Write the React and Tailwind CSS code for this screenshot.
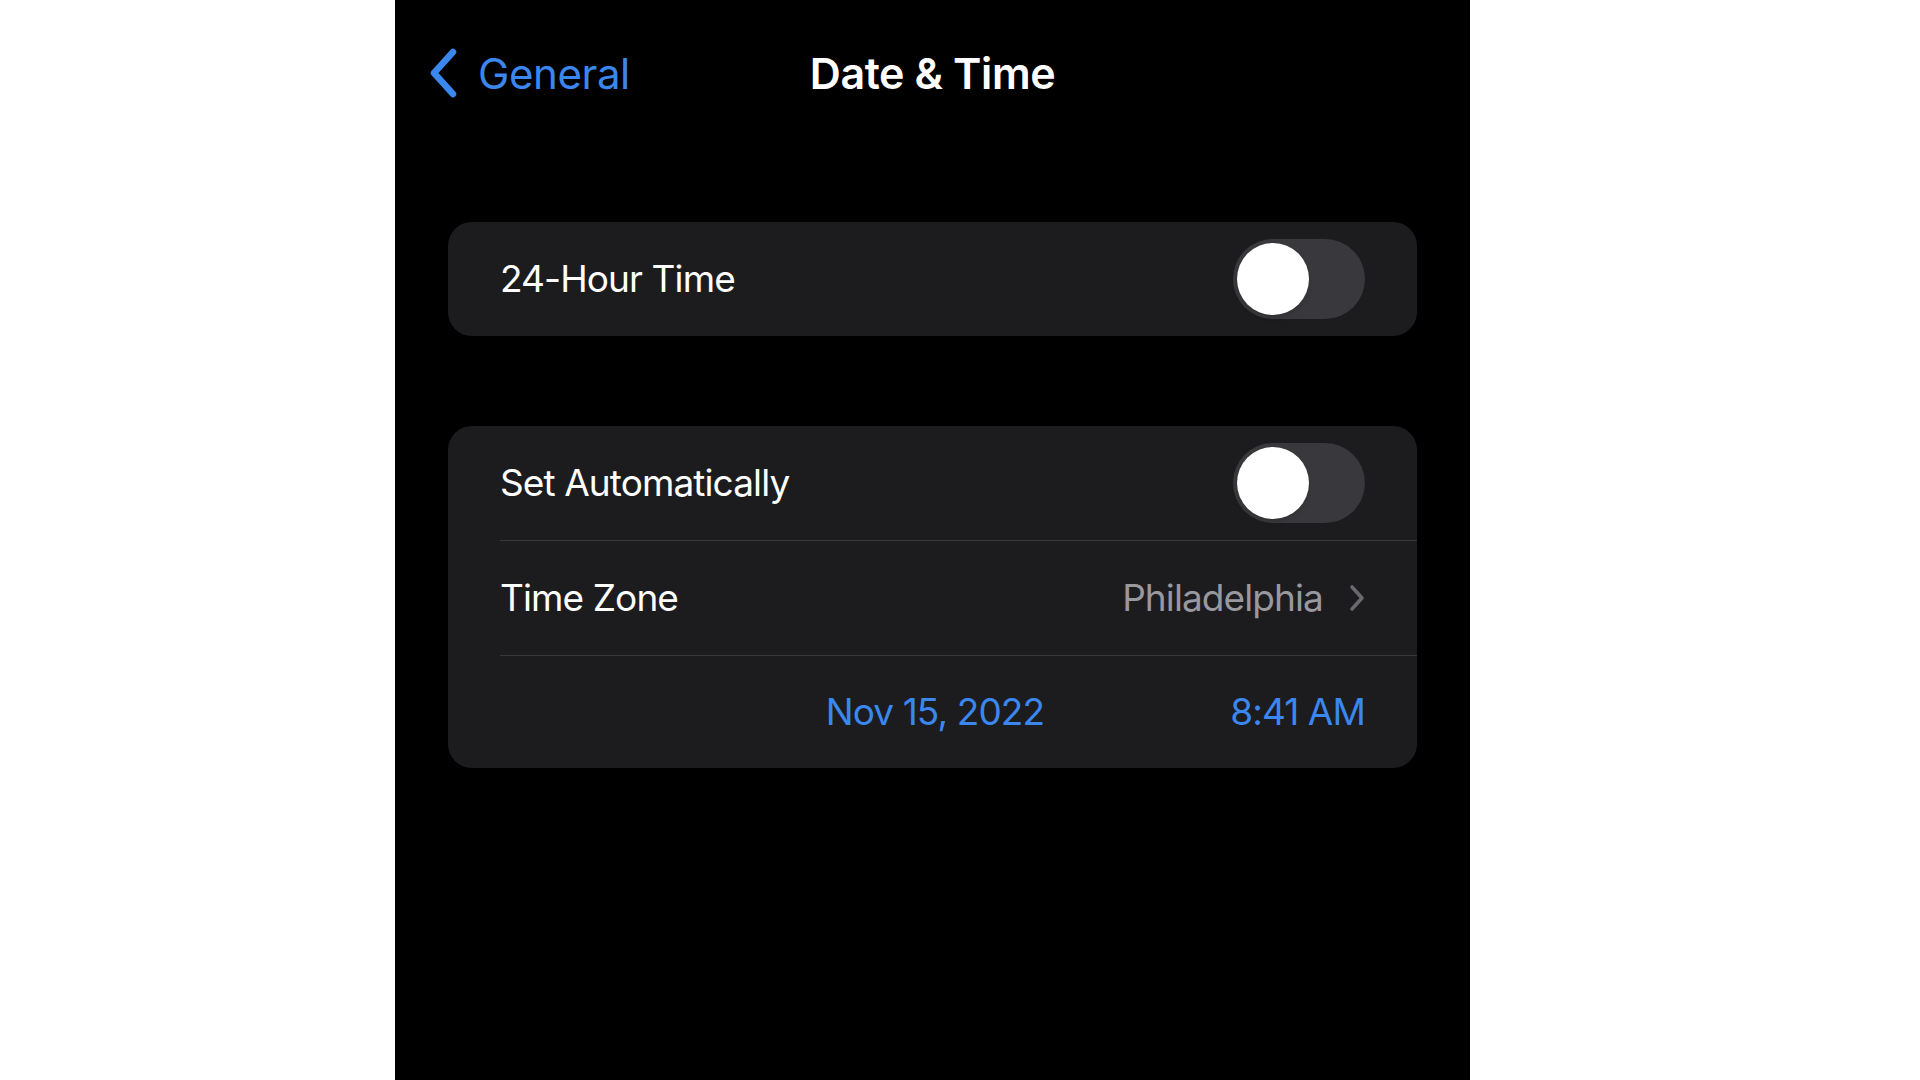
// iOS Settings — Date & Time (dark)
const ChevronLeft = () => (
  <svg viewBox="0 0 30 50" className="w-[30px] h-[50px]" fill="none">
    <path d="M25 4L6 25l19 21" stroke="currentColor" strokeWidth="6.5" strokeLinecap="round" strokeLinejoin="round" />
  </svg>
);

const ChevronRight = () => (
  <svg viewBox="0 0 16 30" className="w-[16px] h-[30px]" fill="none">
    <path d="M3 4l10 11-10 11" stroke="currentColor" strokeWidth="3.6" strokeLinecap="round" strokeLinejoin="round" />
  </svg>
);

const Toggle = () => (
  <div className="w-[132px] h-[80px] rounded-full bg-[#39393d] p-[4px] flex items-center shrink-0">
    <div className="w-[72px] h-[72px] rounded-full bg-white shadow-md" />
  </div>
);

export default function App() {
  return (
    <div className="min-h-screen w-full bg-white" style={{ fontFamily: "Inter, 'Noto Sans', sans-serif" }}>
      <div className="ml-[395px] w-[1075px] h-[1080px] bg-black px-[53px] overflow-hidden">
        {/* nav bar */}
        <header className="h-[146px] grid grid-cols-[1fr_auto_1fr] items-center -mx-[20px]">
          <button className="flex items-center gap-[20px] text-[#3b87f0] justify-self-start">
            <ChevronLeft />
            <span className="text-[42px] tracking-[-0.4px]">General</span>
          </button>
          <h1 className="text-[43px] font-semibold text-white tracking-[-0.4px]">Date &amp; Time</h1>
          <div />
        </header>

        {/* 24-hour */}
        <section className="mt-[76px] h-[114px] rounded-[24px] bg-[#1c1c1e] px-[52px] flex items-center justify-between">
          <span className="text-[37px] text-white tracking-[-0.9px]">24-Hour Time</span>
          <Toggle />
        </section>

        {/* date & time group */}
        <section className="mt-[90px] rounded-[24px] bg-[#1c1c1e] pl-[52px] flex flex-col text-[37px] tracking-[-0.9px]">
          <div className="h-[115px] pr-[52px] flex items-center justify-between border-b-[1.5px] border-[#38383a]">
            <span className="text-white">Set Automatically</span>
            <Toggle />
          </div>
          <div className="h-[115px] pr-[52px] flex items-center justify-between border-b-[1.5px] border-[#38383a]">
            <span className="text-white">Time Zone</span>
            <div className="flex items-center gap-[26px]">
              <span className="text-[#98989e]">Philadelphia</span>
              <span className="text-[#68686d]"><ChevronRight /></span>
            </div>
          </div>
          <div className="h-[112px] pr-[52px] flex items-center justify-end gap-[186px] text-[#3b87f0]">
            <span>Nov 15, 2022</span>
            <span>8:41 AM</span>
          </div>
        </section>
      </div>
    </div>
  );
}
